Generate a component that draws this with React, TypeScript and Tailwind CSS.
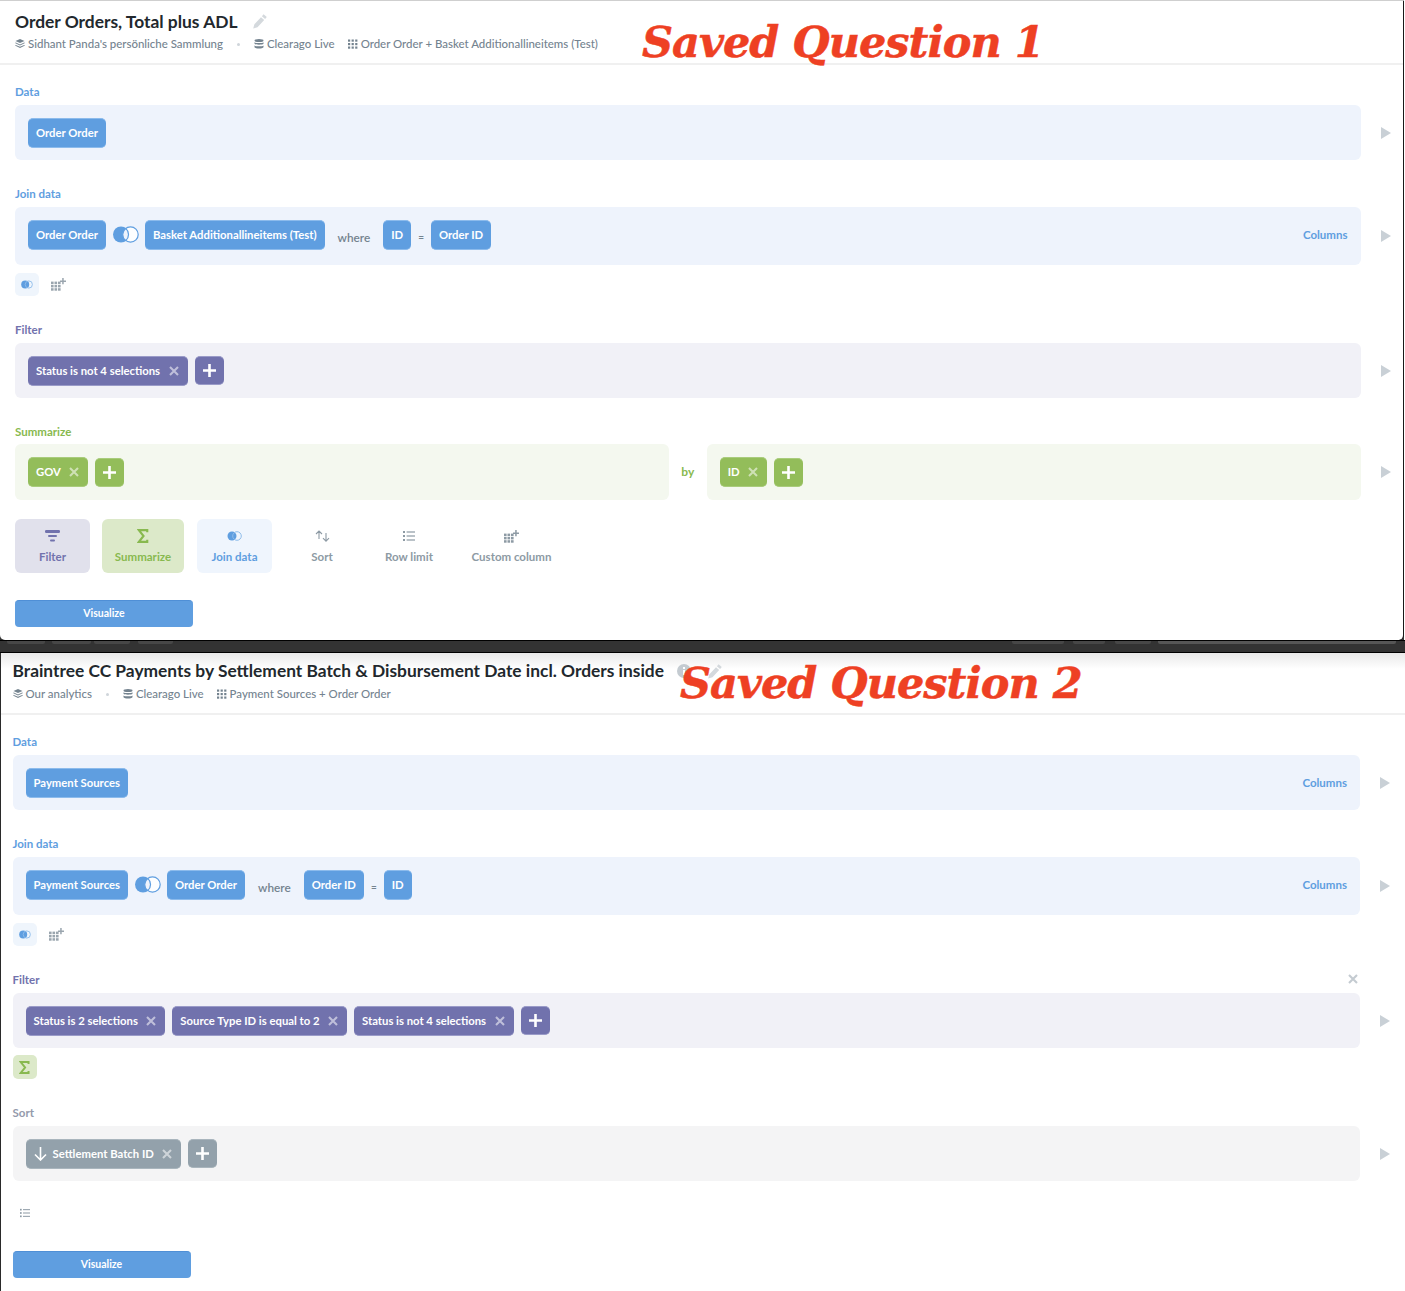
import React from "react";

const Collection = () => (
  <svg width="10" height="10" viewBox="0 0 10 10" fill="#74838f" className="shrink-0">
    <path d="M5 0 9.5 2 5 4 .5 2z" />
    <path d="M.8 3.6 5 5.5l4.2-1.9.8.5L5 6.5 0 4.1zM.8 5.9 5 7.8l4.2-1.9.8.5L5 8.9.0 6.4z" />
  </svg>
);
const Database = () => (
  <svg width="10" height="10" viewBox="0 0 10 10" fill="#74838f" className="shrink-0">
    <ellipse cx="5" cy="1.6" rx="4.5" ry="1.5" />
    <path d="M.5 3.2C1.5 4.4 8.5 4.4 9.5 3.2v1.6C8.5 6 1.5 6 .5 4.8zM.5 6.4c1 1.2 8 1.2 9 0v1.9c-1 1.6-8 1.6-9 0z" />
  </svg>
);
const Grid = ({ c = "#74838f" }: { c?: string }) => (
  <svg width="10" height="10" viewBox="0 0 10 10" fill={c} className="shrink-0">
    {[0, 3.6, 7.2].flatMap((x) =>
      [0.5, 4, 7.5].map((y) => <rect key={`${x}-${y}`} x={x} y={y} width="2.2" height="2.2" />)
    )}
  </svg>
);
const Pencil = ({ size = 16 }: { size?: number }) => (
  <svg width={size} height={size} viewBox="0 0 16 16" fill="#d4d9dd" className="shrink-0">
    <path d="M11.6 1.2 14.8 4l-1.7 2-3.2-2.8zM9 4.3l3.2 2.8-6.7 7.2L1.2 15.4l1.2-4.2z" />
  </svg>
);
const JoinLarge = () => (
  <svg width="26" height="17" viewBox="0 0 26 17" className="shrink-0 -mr-[1px]">
    <circle cx="8" cy="8.5" r="8" fill="#5f9ee0" />
    <circle cx="17.5" cy="8.5" r="7.7" fill="#ffffff" fillOpacity="0.85" stroke="#5f9ee0" strokeWidth="1.2" />
    <path d="M12.7 2.4a8 8 0 0 1 0 12.2 7.7 7.7 0 0 1 0-12.2z" fill="#eef3fc" stroke="#5f9ee0" strokeWidth="1.2" />
  </svg>
);
const JoinSmall = () => (
  <svg width="15" height="10" viewBox="0 0 15 10" className="shrink-0">
    <circle cx="5" cy="5" r="4.5" fill="#5f9ee0" />
    <circle cx="10" cy="5" r="4.3" fill="none" stroke="#8fbcea" strokeWidth="1" />
  </svg>
);
const JoinTiny = () => (
  <svg width="12" height="9" viewBox="0 0 12 9" className="shrink-0">
    <circle cx="4.2" cy="4.5" r="4" fill="#5f9ee0" />
    <circle cx="7.8" cy="4.5" r="3.6" fill="none" stroke="#8fbcea" strokeWidth="0.9" />
  </svg>
);
const CustomColumn = ({ c = "#8d9aa4" }: { c?: string }) => (
  <svg width="15" height="13" viewBox="0 0 15 13" fill={c} className="shrink-0">
    {[0, 3.5, 7].flatMap((x) =>
      [3.6, 6.9, 10.2].map((y) => <rect key={`${x}-${y}`} x={x} y={y} width="2.6" height="2.5" />)
    )}
    <path d="M11.2 0h1.5v2.4H15v1.5h-2.3v2.4h-1.5V3.9H9V2.4h2.2z" />
  </svg>
);
const ListIcon = ({ size = 12 }: { size?: number }) => (
  <svg width={size} height={size} viewBox="0 0 12 12" fill="#8d9aa4" className="shrink-0">
    <rect x="0" y="1" width="2" height="2" />
    <rect x="0" y="5" width="2" height="2" />
    <rect x="0" y="9" width="2" height="2" />
    <rect x="3.6" y="1.4" width="8.4" height="1.2" />
    <rect x="3.6" y="5.4" width="8.4" height="1.2" />
    <rect x="3.6" y="9.4" width="8.4" height="1.2" />
  </svg>
);
const SortIcon = () => (
  <svg width="15" height="12" viewBox="0 0 15 12" fill="none" stroke="#8d9aa4" strokeWidth="1.1" className="shrink-0">
    <path d="M4 9V1M1 4l3-3 3 3M11 3v8.2M8 8.2l3 3 3-3" />
  </svg>
);
const Sigma = ({ h = 14 }: { h?: number }) => (
  <svg width={h * 0.8} height={h} viewBox="0 0 12 15" fill="none" stroke="#88b94f" strokeWidth="2.3" className="shrink-0">
    <path d="M11 3.4V1.2H2L7 7.5 2 13.8h9v-2.2" />
  </svg>
);
const Funnel = () => (
  <svg width="15" height="12" viewBox="0 0 15 12" fill="#7172ad" className="shrink-0">
    <rect x="0" y="0" width="15" height="3" rx="1.2" />
    <rect x="3" y="5" width="9" height="2" rx="1" />
    <rect x="5" y="9.4" width="5" height="2" rx="1" />
  </svg>
);
const Cross = ({ c = "rgba(255,255,255,.55)" }: { c?: string }) => (
  <svg width="10" height="10" viewBox="0 0 10 10" stroke={c} strokeWidth="2.1" className="shrink-0">
    <path d="M1 1l8 8M9 1l-8 8" />
  </svg>
);
const Plus = () => (
  <svg width="13" height="13" viewBox="0 0 13 13" fill="#fff" className="shrink-0">
    <path d="M5.2 0h2.6v5.2H13v2.6H7.8V13H5.2V7.8H0V5.2h5.2z" />
  </svg>
);
const DownArrow = () => (
  <svg width="13" height="14" viewBox="0 0 13 14" fill="none" stroke="#fff" strokeWidth="1.6" className="shrink-0">
    <path d="M6.5 0v13M1 7.5 6.5 13 12 7.5" />
  </svg>
);
const Arrow = () => (
  <svg width="10" height="12" viewBox="0 0 10 12" fill="#c9d0d6" className="shrink-0">
    <path d="M0 0l10 6-10 6z" />
  </svg>
);

const pillColor = {
  blue: "bg-[#5f9ee0] border-[#8cbbec]",
  purple: "bg-[#7172ad] border-[#9a9bc8]",
  green: "bg-[#93bd5a] border-[#a9cc7c]",
  gray: "bg-[#93a1ab] border-[#a9b5bd]",
};
type Tone = keyof typeof pillColor;

const Pill = ({ tone, text, close, lead }: { tone: Tone; text: string; close?: boolean; lead?: React.ReactNode }) => (
  <div className={`h-[30px] flex items-center px-2 rounded-[5px] border-y text-white text-[11.3px] font-bold whitespace-nowrap shrink-0 ${pillColor[tone]}`}>
    {lead}
    <span className="pt-[1px]">{text}</span>
    {close && (
      <span className="ml-[8.5px] mr-[1px]">
        <Cross />
      </span>
    )}
  </div>
);
const PlusBtn = ({ tone }: { tone: Tone }) => (
  <div className={`h-[29px] w-[29px] flex items-center justify-center rounded-[5px] border-y shrink-0 ${pillColor[tone]}`}>
    <Plus />
  </div>
);

const Label = ({ c, children }: { c: string; children: React.ReactNode }) => (
  <div className={`h-4 leading-4 pt-[0.5px] text-[11.5px] font-bold ${c}`}>{children}</div>
);
const Columns = () => <span className="ml-auto text-[11.5px] font-bold text-[#5f9ee0]">Columns</span>;

const Box = ({ bg, h, children }: { bg: string; h: string; children: React.ReactNode }) => (
  <div className={`flex-1 flex items-center gap-[7px] pl-[13px] pr-[13px] rounded-[6px] ${bg} ${h}`}>{children}</div>
);
const Row = ({ children }: { children: React.ReactNode }) => (
  <div className="flex items-center mt-[6px]">
    {children}
    <div className="ml-[20px]">
      <Arrow />
    </div>
  </div>
);

const Where = () => <span className="ml-[6px] mr-[6px] mt-[6px] text-[11.8px] font-semibold text-[#74838f]">where</span>;
const Eq = () => <span className="text-[10px] mt-[6px] text-[#74838f] font-bold">=</span>;

const JoinTools = () => (
  <div className="flex items-center gap-[12px] mt-[8px]">
    <div className="w-[24px] h-[23px] rounded-[5px] bg-[#eff5fc] flex items-center justify-center">
      <JoinTiny />
    </div>
    <CustomColumn c="#9aa5ae" />
  </div>
);

const Action = ({ w, bg, c, icon, text }: { w: string; bg: string; c: string; icon: React.ReactNode; text: string }) => (
  <div className={`h-[54px] ${w} ${bg} rounded-[6px] flex flex-col items-center pt-[9px] shrink-0`}>
    <div className="h-[16px] flex items-center">{icon}</div>
    <span className={`mt-[4px] text-[11.5px] font-bold ${c}`}>{text}</span>
  </div>
);

const Visualize = ({ mt }: { mt: string }) => (
  <div className={`w-[178px] h-[27px] ${mt} rounded-[4px] bg-[#5f9ee0] border-t border-[#4f8fd6] flex items-center justify-center text-white text-[10.5px] font-bold`}>
    Visualize
  </div>
);

const Meta = ({ children }: { children: React.ReactNode }) => (
  <div className="flex items-center gap-[3px] text-[11.45px] font-medium text-[#74838f] whitespace-nowrap">{children}</div>
);

const Stamp = ({ text, cls }: { text: string; cls: string }) => (
  <div
    className={`absolute whitespace-nowrap text-[#ee4023] font-bold italic text-[43px] leading-none [-webkit-text-stroke:0.5px_#ee4023] ${cls}`}
    style={{ fontFamily: '"DejaVu Serif", serif' }}
  >
    {text}
  </div>
);

export default function App() {
  return (
    <div className="relative w-[1405px] h-[1291px] bg-white overflow-hidden" style={{ fontFamily: "Lato, sans-serif" }}>
      {/* first question */}
      <div className="w-[1404px] bg-[#333333]">
        <div className="h-[640px] bg-white border-r-[1.5px] border-t border-black/90 border-t-[#cfcfcf] pl-[15px] pr-[12.5px] rounded-b-[5px]">
          <div className="-ml-[15px] -mr-[12.5px] pl-[15px] h-[64px] border-b-2 border-[#f0f0f0]">
            <div className="flex items-center gap-[15px] pt-[9px] h-[32px]">
              <span className="text-[17.4px] leading-[22px] font-bold text-[#22282d]">Order Orders, Total plus ADL</span>
              <span className="-mt-[1px]">
                <Pencil />
              </span>
            </div>
            <div className="flex items-center mt-[3px] h-4">
              <Meta>
                <Collection />
                Sidhant Panda's persönliche Sammlung
              </Meta>
              <span className="ml-[14px] mr-[14px] w-[3px] h-[3px] rounded-full bg-[#cfd5da]" />
              <Meta>
                <Database />
                Clearago Live
              </Meta>
              <span className="w-[13px]" />
              <Meta>
                <Grid />
                Order Order + Basket Additionallineitems (Test)
              </Meta>
            </div>
          </div>

          <div className="mt-[18px]">
            <Label c="text-[#5f9ee0]">Data</Label>
            <Row>
              <Box bg="bg-[#eef3fc]" h="h-[55px]">
                <Pill tone="blue" text="Order Order" />
              </Box>
            </Row>
          </div>

          <div className="mt-[25px]">
            <Label c="text-[#5f9ee0]">Join data</Label>
            <Row>
              <Box bg="bg-[#eef3fc]" h="h-[58px] pb-[3px]">
                <Pill tone="blue" text="Order Order" />
                <JoinLarge />
                <Pill tone="blue" text="Basket Additionallineitems (Test)" />
                <Where />
                <Pill tone="blue" text="ID" />
                <Eq />
                <Pill tone="blue" text="Order ID" />
                <Columns />
              </Box>
            </Row>
            <JoinTools />
          </div>

          <div className="mt-[25px]">
            <Label c="text-[#7172ad]">Filter</Label>
            <Row>
              <Box bg="bg-[#f1f1f7]" h="h-[55px]">
                <Pill tone="purple" text="Status is not 4 selections" close />
                <PlusBtn tone="purple" />
              </Box>
            </Row>
          </div>

          <div className="mt-[25px]">
            <div className="-mb-[1px]">
              <Label c="text-[#88b94f]">Summarize</Label>
            </div>
            <Row>
              <Box bg="bg-[#f4f8ef]" h="h-[56px]">
                <Pill tone="green" text="GOV" close />
                <PlusBtn tone="green" />
              </Box>
              <span className="w-[38px] text-center text-[12px] font-bold text-[#88b94f]">by</span>
              <Box bg="bg-[#f4f8ef]" h="h-[56px]">
                <Pill tone="green" text="ID" close />
                <PlusBtn tone="green" />
              </Box>
            </Row>
          </div>

          <div className="flex gap-[13px] mt-[19px]">
            <Action w="w-[75px] -mr-[1px]" bg="bg-[#e1e1ec]" c="text-[#7172ad]" icon={<Funnel />} text="Filter" />
            <Action w="w-[82px]" bg="bg-[#dce9c9]" c="text-[#88b94f]" icon={<Sigma />} text="Summarize" />
            <Action w="w-[75px]" bg="bg-[#eff5fd]" c="text-[#5f9ee0]" icon={<JoinSmall />} text="Join data" />
            <Action w="w-[74px]" bg="" c="text-[#8d9aa4]" icon={<SortIcon />} text="Sort" />
            <Action w="w-[74px]" bg="" c="text-[#8d9aa4]" icon={<ListIcon />} text="Row limit" />
            <Action w="w-[105px]" bg="" c="text-[#8d9aa4]" icon={<CustomColumn />} text="Custom column" />
          </div>

          <Visualize mt="mt-[27px]" />
        </div>
      </div>

      {/* window edge between the two captures */}
      <div className="h-[13px] bg-[#333333] border-y border-black flex items-start">
        <div className="ml-[7px] w-[38px] h-[3px] rounded-b-[2px] bg-[#474747]" />
        <div className="ml-[7px] w-[39px] h-[3px] rounded-b-[2px] bg-[#474747]" />
        <div className="ml-[3px] w-[36px] h-[3px] rounded-b-[2px] bg-[#474747]" />
        <div className="ml-[8px] w-[35px] h-[3px] rounded-b-[2px] bg-[#474747]" />
        <div className="ml-[839px] w-[52px] h-[3px] rounded-b-[2px] bg-[#474747]" />
        <div className="ml-[9px] w-[32px] h-[3px] rounded-b-[2px] bg-[#474747]" />
        <div className="ml-[10px] w-[36px] h-[3px] rounded-b-[2px] bg-[#474747]" />
        <div className="ml-[7px] w-[238px] h-[3px] rounded-b-[2px] bg-[#565656]" />
      </div>

      {/* second question */}
      <div className="h-[638px] border-l-[1.5px] border-[#2a2a2a] pl-[11.5px] pr-[15px] bg-[linear-gradient(#e9e9e9,#ffffff_16px)]">
        <div className="-ml-[11.5px] -mr-[15px] pl-[11.5px] h-[62px] border-b-2 border-[#f0f0f0]">
          <div className="flex items-center gap-[13px] pt-[7px] h-[29px]">
            <span className="text-[17.36px] leading-[22px] font-bold text-[#22282d]">
              Braintree CC Payments by Settlement Batch &amp; Disbursement Date incl. Orders inside
            </span>
            <svg width="14" height="14" viewBox="0 0 14 14" className="shrink-0">
              <circle cx="7" cy="7" r="7" fill="#c4cbd1" />
              <rect x="6" y="6" width="2" height="5" fill="#fff" />
              <rect x="6" y="3" width="2" height="2" fill="#fff" />
            </svg>
            <span className="ml-[3px]">
              <Pencil />
            </span>
          </div>
          <div className="flex items-center mt-[4px] h-4">
            <Meta>
              <Collection />
              Our analytics
            </Meta>
            <span className="ml-[14px] mr-[14px] w-[3px] h-[3px] rounded-full bg-[#cfd5da]" />
            <Meta>
              <Database />
              Clearago Live
            </Meta>
            <span className="w-[13px]" />
            <Meta>
              <Grid />
              Payment Sources + Order Order
            </Meta>
          </div>
        </div>

        <div className="mt-[18px]">
          <Label c="text-[#5f9ee0]">Data</Label>
          <Row>
            <Box bg="bg-[#eef3fc]" h="h-[55px]">
              <Pill tone="blue" text="Payment Sources" />
              <Columns />
            </Box>
          </Row>
        </div>

        <div className="mt-[25px]">
          <Label c="text-[#5f9ee0]">Join data</Label>
          <Row>
            <Box bg="bg-[#eef3fc]" h="h-[58px] pb-[3px]">
              <Pill tone="blue" text="Payment Sources" />
              <JoinLarge />
              <Pill tone="blue" text="Order Order" />
              <Where />
              <Pill tone="blue" text="Order ID" />
              <Eq />
              <Pill tone="blue" text="ID" />
              <Columns />
            </Box>
          </Row>
          <JoinTools />
        </div>

        <div className="mt-[25px]">
          <div className="flex items-center justify-between pr-[2px] mr-[30px]">
            <Label c="text-[#7172ad]">Filter</Label>
            <Cross c="#c4cbd1" />
          </div>
          <Row>
            <Box bg="bg-[#f1f1f7]" h="h-[55px]">
              <Pill tone="purple" text="Status is 2 selections" close />
              <Pill tone="purple" text="Source Type ID is equal to 2" close />
              <Pill tone="purple" text="Status is not 4 selections" close />
              <PlusBtn tone="purple" />
            </Box>
          </Row>
          <div className="mt-[7px] w-[24px] h-[24px] rounded-[5px] bg-[#dce9c9] flex items-center justify-center">
            <Sigma h={13} />
          </div>
        </div>

        <div className="mt-[25px]">
          <Label c="text-[#949aab]">Sort</Label>
          <Row>
            <Box bg="bg-[#f4f4f5]" h="h-[55px]">
              <Pill
                tone="gray"
                text="Settlement Batch ID"
                close
                lead={
                  <span className="mr-[6px]">
                    <DownArrow />
                  </span>
                }
              />
              <PlusBtn tone="gray" />
            </Box>
          </Row>
        </div>

        <div className="mt-[20px] w-[24px] h-[24px] flex items-center justify-center">
          <ListIcon size={10} />
        </div>

        <Visualize mt="mt-[26px]" />
      </div>

      <Stamp text="Saved Question 1" cls="left-[642px] top-[21px] tracking-[-1px]" />
      <Stamp text="Saved Question 2" cls="left-[680px] top-[662px] tracking-[-1px]" />
    </div>
  );
}
